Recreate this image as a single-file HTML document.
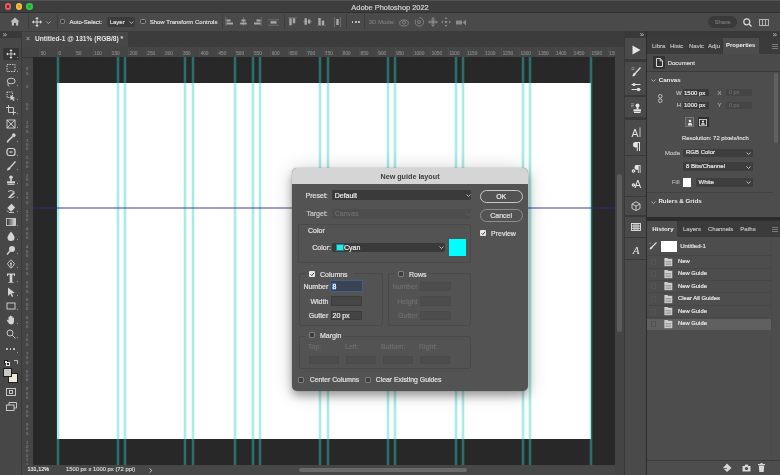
<!DOCTYPE html><html><head><meta charset="utf-8"><style>
*{margin:0;padding:0;box-sizing:border-box}
html,body{width:780px;height:475px;overflow:hidden;background:#282828;font-family:"Liberation Sans",sans-serif;color:#d8d8d8}
.a{position:absolute}
.t{position:absolute;white-space:nowrap;line-height:1;-webkit-text-stroke:0.2px currentColor}
svg{position:absolute;overflow:visible}
</style></head><body><div class="a" style="left:0;top:0;width:780px;height:475px;overflow:hidden;will-change:transform">
<div class="a" style="left:0px;top:0px;width:780px;height:12px;background:#3e3e3e;border-top:1px solid #525252"></div>
<div class="a" style="left:4.70px;top:3.2px;width:6.4px;height:6.4px;border-radius:50%;background:radial-gradient(circle,#a01818 0,#a01818 1.1px,#ea6262 1.9px)"></div>
<div class="a" style="left:15.80px;top:3.2px;width:6.4px;height:6.4px;border-radius:50%;background:radial-gradient(circle,#e0a020 0,#e0a020 1.1px,#f4c044 1.9px)"></div>
<div class="a" style="left:26.30px;top:3.2px;width:6.4px;height:6.4px;border-radius:50%;background:radial-gradient(circle,#20a830 0,#20a830 1.1px,#34c448 1.9px)"></div>
<div class="t" style="left:290px;width:200px;text-align:center;top:3.57px;font-size:7.4px;color:#d2d2d2;">Adobe Photoshop 2022</div>
<div class="a" style="left:0px;top:12px;width:780px;height:19px;background:#4a4a4a;border-top:1px solid #303030"></div>
<div class="a" style="left:0px;top:31px;width:780px;height:1px;background:#2c2c2c;"></div>
<svg style="left:10px;top:17px" width="10" height="9" viewBox="0 0 10 9"><path d="M5 0.5 L9.5 4.5 L8.2 4.5 L8.2 8.5 L6 8.5 L6 6 L4 6 L4 8.5 L1.8 8.5 L1.8 4.5 L0.5 4.5 Z" fill="#bdbdbd"/></svg>
<div class="a" style="left:28px;top:14px;width:1px;height:15px;background:#3e3e3e;"></div>
<svg style="left:32px;top:17px" width="10" height="10" viewBox="0 0 10 10"><g stroke="#d4d4d4" stroke-width="1" fill="none"><path d="M5 0.5V9.5M0.5 5H9.5"/></g><g fill="#d4d4d4"><path d="M5 0 L6.8 2 L3.2 2Z M5 10 L6.8 8 L3.2 8Z M0 5 L2 3.2 L2 6.8Z M10 5 L8 3.2 L8 6.8Z"/></g></svg>
<svg style="left:45.5px;top:20.5px" width="5" height="3" viewBox="0 0 5 3"><path d="M0.5 0.5 L2.5 2.5 L4.5 0.5" stroke="#aaa" fill="none" stroke-width="0.9"/></svg>
<div class="a" style="left:56.5px;top:14px;width:1px;height:15px;background:#3e3e3e;"></div>
<div class="a" style="left:59.5px;top:18.8px;width:5.6px;height:5.6px;background:#3c3c3c;border:0.8px solid #8a8a8a;border-radius:1.5px"></div>
<div class="t" style="left:69.5px;top:18.66px;font-size:6px;color:#dedede;">Auto-Select:</div>
<div class="a" style="left:106.7px;top:16.5px;width:28.3px;height:10.5px;background:#3b3b3b;border-radius:2px"></div>
<div class="t" style="left:109.7px;top:18.66px;font-size:6px;color:#dedede;">Layer</div>
<svg style="left:129px;top:20.5px" width="5" height="3" viewBox="0 0 5 3"><path d="M0.5 0.5 L2.5 2.5 L4.5 0.5" stroke="#bbb" fill="none" stroke-width="0.9"/></svg>
<div class="a" style="left:140px;top:18.8px;width:5.6px;height:5.6px;background:#3c3c3c;border:0.8px solid #8a8a8a;border-radius:1.5px"></div>
<div class="t" style="left:149.7px;top:18.66px;font-size:6px;color:#dedede;">Show Transform Controls</div>
<div class="a" style="left:221.5px;top:14px;width:1px;height:15px;background:#3e3e3e;"></div>
<svg style="left:224.5px;top:17px" width="9" height="9" viewBox="0 0 9 9"><rect x="0.5" y="0" width="0.7" height="9" fill="#7a7a7a"/><g fill="#a8a8a8"><rect x="1.5" y="2.5" width="4" height="2"/><rect x="1.5" y="5.5" width="6.5" height="2"/></g></svg>
<svg style="left:239px;top:17px" width="9" height="9" viewBox="0 0 9 9"><rect x="4.2" y="0" width="0.7" height="9" fill="#7a7a7a"/><g fill="#a8a8a8"><rect x="2.5" y="2.5" width="4" height="2"/><rect x="1.2" y="5.5" width="6.5" height="2"/></g></svg>
<svg style="left:252.5px;top:17px" width="9" height="9" viewBox="0 0 9 9"><rect x="7.8" y="0" width="0.7" height="9" fill="#7a7a7a"/><g fill="#a8a8a8"><rect x="3.5" y="2.5" width="4" height="2"/><rect x="1" y="5.5" width="6.5" height="2"/></g></svg>
<svg style="left:267.5px;top:18.5px" width="11" height="7" viewBox="0 0 11 7"><g fill="#7a7a7a"><rect x="0" y="0.5" width="11" height="0.7"/><rect x="0" y="5.8" width="11" height="0.7"/></g><rect x="2.5" y="2.2" width="6" height="2.4" fill="#a8a8a8"/></svg>
<div class="a" style="left:283.5px;top:14px;width:1px;height:15px;background:#3e3e3e;"></div>
<svg style="left:288px;top:17px" width="9" height="9" viewBox="0 0 9 9"><rect x="0" y="0.5" width="9" height="0.7" fill="#7a7a7a"/><g fill="#a8a8a8"><rect x="1.3" y="1.3" width="2.4" height="7"/><rect x="4.8" y="1.3" width="2.4" height="5"/></g></svg>
<svg style="left:302.5px;top:17px" width="9" height="9" viewBox="0 0 9 9"><rect x="0" y="4.2" width="9" height="0.7" fill="#7a7a7a"/><g fill="#a8a8a8"><rect x="1.5" y="1.3" width="2.4" height="6.5"/><rect x="5" y="2.6" width="2.4" height="4"/></g></svg>
<svg style="left:316.5px;top:17px" width="9" height="9" viewBox="0 0 9 9"><rect x="0" y="8" width="9" height="0.7" fill="#7a7a7a"/><g fill="#a8a8a8"><rect x="1.3" y="1" width="2.4" height="7"/><rect x="4.8" y="3.5" width="2.4" height="4.5"/></g></svg>
<svg style="left:333.5px;top:17px" width="7" height="10" viewBox="0 0 7 10"><g fill="#7a7a7a"><rect x="0.3" y="0" width="0.7" height="10"/><rect x="6" y="0" width="0.7" height="10"/></g><rect x="2.3" y="2" width="2.4" height="6" fill="#a8a8a8"/></svg>
<div class="a" style="left:345.5px;top:14px;width:1px;height:15px;background:#3e3e3e;"></div>
<div class="a" style="left:351.6px;top:20.8px;width:1.8px;height:1.8px;background:#d8d8d8;border-radius:50%"></div>
<div class="a" style="left:354.90000000000003px;top:20.8px;width:1.8px;height:1.8px;background:#d8d8d8;border-radius:50%"></div>
<div class="a" style="left:358.20000000000005px;top:20.8px;width:1.8px;height:1.8px;background:#d8d8d8;border-radius:50%"></div>
<div class="a" style="left:364px;top:14px;width:1px;height:15px;background:#3e3e3e;"></div>
<div class="t" style="left:368.7px;top:18.66px;font-size:6px;color:#777777;">3D Mode:</div>
<svg style="left:399px;top:17.5px" width="10" height="9" viewBox="0 0 10 9"><g stroke="#888888" fill="none" stroke-width="0.9"><ellipse cx="5" cy="5" rx="4.3" ry="3"/><circle cx="5" cy="4.5" r="1.6"/></g></svg>
<svg style="left:413.5px;top:17px" width="10" height="10" viewBox="0 0 10 10"><g stroke="#888888" fill="none" stroke-width="0.9"><path d="M2 2.5 A4.2 4.2 0 1 0 5 0.8"/><circle cx="5" cy="5" r="1.5"/></g></svg>
<svg style="left:428px;top:17px" width="10" height="10" viewBox="0 0 10 10"><g fill="#888888"><path d="M5 0 L7 2.5 L3 2.5Z M5 10 L7 7.5 L3 7.5Z M0 5 L2.5 3 L2.5 7Z M10 5 L7.5 3 L7.5 7Z"/><circle cx="5" cy="5" r="2"/></g></svg>
<svg style="left:441px;top:17px" width="10" height="10" viewBox="0 0 10 10"><g fill="#888888"><path d="M5 0 L6.5 2 L3.5 2Z M5 10 L6.5 8 L3.5 8Z M0 5 L2 3.5 L2 6.5Z M10 5 L8 3.5 L8 6.5Z"/><circle cx="5" cy="5" r="1.3"/></g></svg>
<svg style="left:455.5px;top:18.5px" width="11" height="7" viewBox="0 0 11 7"><g fill="#888888"><rect x="0" y="1.5" width="6" height="4"/><path d="M6.5 3.5 L10 0.5 L10 6.5Z"/></g></svg>
<div class="a" style="left:708px;top:16.3px;width:29px;height:11.6px;background:#3a3a3a;border-radius:6px"></div>
<div class="t" style="left:622.5px;width:200px;text-align:center;top:19.16px;font-size:6px;color:#747474;">Share</div>
<svg style="left:743px;top:17.5px" width="9" height="9" viewBox="0 0 9 9"><g stroke="#dcdcdc" fill="none" stroke-width="1.2"><circle cx="3.8" cy="3.8" r="3"/><path d="M6 6 L8.5 8.5"/></g></svg>
<svg style="left:758.5px;top:18.8px" width="10" height="7" viewBox="0 0 10 7"><g stroke="#bdbdbd" fill="none" stroke-width="0.9"><rect x="0.5" y="0.5" width="9" height="6"/><path d="M3.5 0.5V6.5M6.5 0.5V6.5"/></g></svg>
<div class="a" style="left:0px;top:31px;width:21px;height:444px;background:#474747;"></div>
<div class="a" style="left:0px;top:31px;width:21px;height:6.5px;background:#393939;"></div>
<svg style="left:3px;top:32.6px" width="4" height="3.6" viewBox="0 0 4 3.6"><path d="M0.4 0.3 L1.6 1.8 L0.4 3.3 M2.2 0.3 L3.4 1.8 L2.2 3.3" stroke="#d0d0d0" stroke-width="0.8" fill="none"/></svg>
<div class="a" style="left:21px;top:31px;width:1.2px;height:444px;background:#393939;"></div>
<div class="a" style="left:2.5px;top:47.5px;width:16.5px;height:12px;background:#353535;border-radius:1px"></div>
<svg style="left:5.5px;top:48.5px" width="10" height="10" viewBox="0 0 10 10"><g stroke="#d4d4d4" fill="none" stroke-width="0.9"><path d="M5 1V9M1 5H9"/></g><g fill="#d4d4d4"><path d="M5 0 L6.6 2 L3.4 2Z M5 10 L6.6 8 L3.4 8Z M0 5 L2 3.4 L2 6.6Z M10 5 L8 3.4 L8 6.6Z"/></g></svg>
<svg style="left:5.5px;top:62.5px" width="10" height="10" viewBox="0 0 10 10"><rect x="1" y="1.5" width="8" height="7" stroke="#d4d4d4" fill="none" stroke-width="0.9" stroke-dasharray="1.5 1"/></svg>
<svg style="left:5.5px;top:76.5px" width="10" height="10" viewBox="0 0 10 10"><g stroke="#d4d4d4" fill="none" stroke-width="0.9"><ellipse cx="5.2" cy="4" rx="4" ry="2.8"/><path d="M2 6 Q1.5 8.5 3 9.5"/></g></svg>
<svg style="left:5.5px;top:90.5px" width="10" height="10" viewBox="0 0 10 10"><g stroke="#d4d4d4" fill="none" stroke-width="0.9"><rect x="1" y="1" width="5.5" height="5.5" stroke-dasharray="1.3 0.8"/></g><path d="M4.5 4 L4.5 9.5 L6 8 L7.5 10 L8.5 9.5 L7.3 7.5 L9.3 7.3Z" fill="#d4d4d4"/></svg>
<svg style="left:5.5px;top:104.5px" width="10" height="10" viewBox="0 0 10 10"><g stroke="#d4d4d4" fill="none" stroke-width="0.9"><path d="M2.5 0V7.5H10M0 2.5H7.5V10"/></g></svg>
<svg style="left:5.5px;top:118.5px" width="10" height="10" viewBox="0 0 10 10"><g stroke="#d4d4d4" fill="none" stroke-width="0.9"><rect x="1" y="1" width="8" height="8"/><path d="M1 1L9 9M9 1L1 9"/></g></svg>
<svg style="left:5.5px;top:132.5px" width="10" height="10" viewBox="0 0 10 10"><g fill="#d4d4d4"><path d="M7.3 0.3 Q9.7 0.3 9.7 2.7 L8 4.4 L5.6 2Z"/></g><path d="M6.8 3.2 L2 8 L1.2 9.3" stroke="#d4d4d4" stroke-width="1.6" fill="none"/></svg>
<svg style="left:5.5px;top:146.5px" width="10" height="10" viewBox="0 0 10 10"><g stroke="#d4d4d4" fill="none" stroke-width="1.2"><rect x="1" y="1.5" width="8" height="7" rx="2.2"/></g><rect x="3.5" y="4" width="3" height="2" fill="#d4d4d4" opacity=".6"/></svg>
<svg style="left:5.5px;top:160.5px" width="10" height="10" viewBox="0 0 10 10"><path d="M9.5 0.5 L4 6.5" stroke="#d4d4d4" stroke-width="1.3"/><path d="M3.8 6 Q1 6.5 1 9.5 Q3.5 9.5 4.8 7.2Z" fill="#d4d4d4"/></svg>
<svg style="left:5.5px;top:174.5px" width="10" height="10" viewBox="0 0 10 10"><g fill="#d4d4d4"><circle cx="5" cy="2.3" r="1.8"/><rect x="4.2" y="3.5" width="1.6" height="3"/><rect x="1" y="6.3" width="8" height="2"/><rect x="1.5" y="8.8" width="7" height="1"/></g></svg>
<svg style="left:5.5px;top:188.5px" width="10" height="10" viewBox="0 0 10 10"><g stroke="#d4d4d4" fill="none" stroke-width="0.9"><path d="M2 2.5 Q5 0.5 8 2.5 L2.5 8.5 Q5.5 9.5 8.5 7.5"/></g><path d="M8.5 3.5 L4 8" stroke="#d4d4d4" stroke-width="1.2"/></svg>
<svg style="left:5.5px;top:202.5px" width="10" height="10" viewBox="0 0 10 10"><g fill="#d4d4d4"><path d="M5.5 0.8 L9.2 4.5 L5 8.7 L1.3 5Z"/></g><path d="M1 7.5 L3 9.5H8" stroke="#d4d4d4" stroke-width="0.9" fill="none"/></svg>
<svg style="left:5.5px;top:216.5px" width="10" height="10" viewBox="0 0 10 10"><defs><linearGradient id="gg"><stop offset="0" stop-color="#303030"/><stop offset="1" stop-color="#e0e0e0"/></linearGradient></defs><rect x="0.5" y="1.5" width="9" height="7" fill="url(#gg)" stroke="#d4d4d4" stroke-width="0.8"/></svg>
<svg style="left:5.5px;top:230.5px" width="10" height="10" viewBox="0 0 10 10"><path d="M5 0.5 Q8.5 5 8.5 6.5 A3.5 3.5 0 0 1 1.5 6.5 Q1.5 5 5 0.5Z" fill="#d4d4d4"/></svg>
<svg style="left:5.5px;top:244.5px" width="10" height="10" viewBox="0 0 10 10"><circle cx="6" cy="4" r="3" fill="#d4d4d4"/><path d="M4 6 L1 9.5" stroke="#d4d4d4" stroke-width="1.3"/></svg>
<svg style="left:5.5px;top:258.5px" width="10" height="10" viewBox="0 0 10 10"><g stroke="#d4d4d4" fill="none" stroke-width="0.9"><path d="M5 0.8 L8.5 4.5 Q7 8 5 9.2 Q3 8 1.5 4.5Z"/><path d="M5 4V9"/></g><circle cx="5" cy="4.5" r="0.9" fill="#d4d4d4"/></svg>
<svg style="left:5.5px;top:272.5px" width="10" height="10" viewBox="0 0 10 10"><g fill="#d4d4d4"><path d="M1 0.5H9V3H8.2Q8 1.6 6.3 1.6V9H7.5V9.8H2.5V9H3.7V1.6Q2 1.6 1.8 3H1Z"/></g></svg>
<svg style="left:5.5px;top:286.5px" width="10" height="10" viewBox="0 0 10 10"><path d="M2 0.5 L2 9 L4.3 6.8 L6 10 L7.3 9.3 L5.6 6.3 L8.8 6Z" fill="#d4d4d4"/></svg>
<svg style="left:5.5px;top:300.5px" width="10" height="10" viewBox="0 0 10 10"><rect x="1" y="2" width="8" height="6" fill="none" stroke="#d4d4d4" stroke-width="0.9"/></svg>
<svg style="left:5.5px;top:314.5px" width="10" height="10" viewBox="0 0 10 10"><path d="M2.5 4 V2 Q3.2 1 3.8 2 V4 V1 Q4.5 0 5.2 1 V4 V1.5 Q5.9 0.5 6.6 1.5 V4.5 V3 Q7.3 2 8 3 V6 Q8 9.5 5 9.5 Q3 9.5 1.5 6.5 L0.8 5 Q1.3 4.2 2.5 5.5Z" fill="#d4d4d4"/></svg>
<svg style="left:5.5px;top:328.5px" width="10" height="10" viewBox="0 0 10 10"><g stroke="#d4d4d4" fill="none" stroke-width="0.9" stroke-width="1.1"><circle cx="4" cy="4" r="3"/><path d="M6.2 6.2 L9.5 9.5"/></g></svg>
<div class="a" style="left:16.8px;top:56.7px;width:1.2px;height:1.2px;background:#9a9a9a;"></div>
<div class="a" style="left:16.8px;top:70.7px;width:1.2px;height:1.2px;background:#9a9a9a;"></div>
<div class="a" style="left:16.8px;top:84.7px;width:1.2px;height:1.2px;background:#9a9a9a;"></div>
<div class="a" style="left:16.8px;top:98.7px;width:1.2px;height:1.2px;background:#9a9a9a;"></div>
<div class="a" style="left:16.8px;top:112.7px;width:1.2px;height:1.2px;background:#9a9a9a;"></div>
<div class="a" style="left:16.8px;top:126.7px;width:1.2px;height:1.2px;background:#9a9a9a;"></div>
<div class="a" style="left:16.8px;top:140.7px;width:1.2px;height:1.2px;background:#9a9a9a;"></div>
<div class="a" style="left:16.8px;top:154.7px;width:1.2px;height:1.2px;background:#9a9a9a;"></div>
<div class="a" style="left:16.8px;top:168.7px;width:1.2px;height:1.2px;background:#9a9a9a;"></div>
<div class="a" style="left:16.8px;top:182.7px;width:1.2px;height:1.2px;background:#9a9a9a;"></div>
<div class="a" style="left:16.8px;top:196.7px;width:1.2px;height:1.2px;background:#9a9a9a;"></div>
<div class="a" style="left:16.8px;top:210.7px;width:1.2px;height:1.2px;background:#9a9a9a;"></div>
<div class="a" style="left:16.8px;top:224.7px;width:1.2px;height:1.2px;background:#9a9a9a;"></div>
<div class="a" style="left:16.8px;top:238.7px;width:1.2px;height:1.2px;background:#9a9a9a;"></div>
<div class="a" style="left:16.8px;top:252.7px;width:1.2px;height:1.2px;background:#9a9a9a;"></div>
<div class="a" style="left:16.8px;top:266.7px;width:1.2px;height:1.2px;background:#9a9a9a;"></div>
<div class="a" style="left:16.8px;top:280.7px;width:1.2px;height:1.2px;background:#9a9a9a;"></div>
<div class="a" style="left:16.8px;top:294.7px;width:1.2px;height:1.2px;background:#9a9a9a;"></div>
<div class="a" style="left:16.8px;top:308.7px;width:1.2px;height:1.2px;background:#9a9a9a;"></div>
<div class="a" style="left:16.8px;top:322.7px;width:1.2px;height:1.2px;background:#9a9a9a;"></div>
<div class="a" style="left:16.8px;top:336.7px;width:1.2px;height:1.2px;background:#9a9a9a;"></div>
<div class="a" style="left:6.1px;top:348.4px;width:1.8px;height:1.8px;background:#dcdcdc;border-radius:50%"></div>
<div class="a" style="left:9.6px;top:348.4px;width:1.8px;height:1.8px;background:#dcdcdc;border-radius:50%"></div>
<div class="a" style="left:13.1px;top:348.4px;width:1.8px;height:1.8px;background:#dcdcdc;border-radius:50%"></div>
<div class="a" style="left:16.8px;top:351.5px;width:1.2px;height:1.2px;background:#9a9a9a;"></div>
<div class="a" style="left:3.5px;top:359.5px;width:4px;height:4px;background:#e8e8e8;border:0.6px solid #222"></div>
<div class="a" style="left:5.5px;top:361.5px;width:4px;height:4px;background:#222;border:0.6px solid #e8e8e8"></div>
<svg style="left:12.5px;top:358.5px" width="6" height="6" viewBox="0 0 6 6"><path d="M1 1.5 H4.5 V5" stroke="#cfcfcf" fill="none" stroke-width="0.9"/></svg>
<div class="a" style="left:7.6px;top:372.8px;width:10.6px;height:10.6px;background:#efe9d8;border:0.8px solid #1e1e1e"></div>
<div class="a" style="left:2.5px;top:368.2px;width:9px;height:9px;background:#c9c9c5;border:0.8px solid #1e1e1e"></div>
<svg style="left:5.5px;top:388px" width="10" height="8" viewBox="0 0 10 8"><rect x="0.5" y="0.5" width="9" height="7" fill="none" stroke="#d4d4d4" stroke-width="0.9"/><rect x="3.5" y="2.5" width="3" height="3" fill="none" stroke="#d4d4d4" stroke-width="0.9"/></svg>
<svg style="left:5.5px;top:401.5px" width="11" height="9" viewBox="0 0 11 9"><g fill="none" stroke="#d4d4d4" stroke-width="0.9"><rect x="0.5" y="3" width="7.5" height="5.5"/><path d="M3 3V0.5H10.5V6H8"/></g></svg>
<div class="a" style="left:22.2px;top:31px;width:593px;height:16px;background:#3c3c3c;"></div>
<div class="a" style="left:22.2px;top:31.8px;width:106.3px;height:15.2px;background:#474747;"></div>
<div class="t" style="left:-72px;width:200px;text-align:center;top:35.37px;font-size:7px;color:#9a9a9a;">×</div>
<div class="t" style="left:35px;top:36.47px;font-size:6.6px;color:#e4e4e4;font-weight:bold;-webkit-text-stroke:0;">Untitled-1 @ 131% (RGB/8) *</div>
<div class="a" style="left:22.2px;top:47px;width:593px;height:10px;background:#454545;"></div>
<div class="a" style="left:22.2px;top:47px;width:11px;height:418px;background:#454545;"></div>
<div class="a" style="left:22.2px;top:56.5px;width:593px;height:0.6px;background:#353535;"></div>
<div class="a" style="left:32.6px;top:57px;width:0.6px;height:408px;background:#353535;"></div>
<div class="a" style="left:39.43000000000001px;top:47px;width:0.6px;height:10px;background:#4c4c4c;"></div>
<div class="t" style="left:40.730000000000004px;top:52.00px;font-size:4.7px;color:#828282;">50</div>
<div class="a" style="left:57.2px;top:47px;width:0.6px;height:10px;background:#4c4c4c;"></div>
<div class="t" style="left:58.5px;top:52.00px;font-size:4.7px;color:#828282;">0</div>
<div class="a" style="left:74.97px;top:47px;width:0.6px;height:10px;background:#4c4c4c;"></div>
<div class="t" style="left:76.27px;top:52.00px;font-size:4.7px;color:#828282;">50</div>
<div class="a" style="left:92.74px;top:47px;width:0.6px;height:10px;background:#4c4c4c;"></div>
<div class="t" style="left:94.03999999999999px;top:52.00px;font-size:4.7px;color:#828282;">100</div>
<div class="a" style="left:110.51px;top:47px;width:0.6px;height:10px;background:#4c4c4c;"></div>
<div class="t" style="left:111.81px;top:52.00px;font-size:4.7px;color:#828282;">150</div>
<div class="a" style="left:128.27999999999997px;top:47px;width:0.6px;height:10px;background:#4c4c4c;"></div>
<div class="t" style="left:129.57999999999998px;top:52.00px;font-size:4.7px;color:#828282;">200</div>
<div class="a" style="left:146.04999999999998px;top:47px;width:0.6px;height:10px;background:#4c4c4c;"></div>
<div class="t" style="left:147.35px;top:52.00px;font-size:4.7px;color:#828282;">250</div>
<div class="a" style="left:163.82px;top:47px;width:0.6px;height:10px;background:#4c4c4c;"></div>
<div class="t" style="left:165.12px;top:52.00px;font-size:4.7px;color:#828282;">300</div>
<div class="a" style="left:181.58999999999997px;top:47px;width:0.6px;height:10px;background:#4c4c4c;"></div>
<div class="t" style="left:182.89px;top:52.00px;font-size:4.7px;color:#828282;">350</div>
<div class="a" style="left:199.35999999999999px;top:47px;width:0.6px;height:10px;background:#4c4c4c;"></div>
<div class="t" style="left:200.66px;top:52.00px;font-size:4.7px;color:#828282;">400</div>
<div class="a" style="left:217.13px;top:47px;width:0.6px;height:10px;background:#4c4c4c;"></div>
<div class="t" style="left:218.43px;top:52.00px;font-size:4.7px;color:#828282;">450</div>
<div class="a" style="left:234.89999999999998px;top:47px;width:0.6px;height:10px;background:#4c4c4c;"></div>
<div class="t" style="left:236.2px;top:52.00px;font-size:4.7px;color:#828282;">500</div>
<div class="a" style="left:252.67px;top:47px;width:0.6px;height:10px;background:#4c4c4c;"></div>
<div class="t" style="left:253.97px;top:52.00px;font-size:4.7px;color:#828282;">550</div>
<div class="a" style="left:270.44px;top:47px;width:0.6px;height:10px;background:#4c4c4c;"></div>
<div class="t" style="left:271.74px;top:52.00px;font-size:4.7px;color:#828282;">600</div>
<div class="a" style="left:288.21px;top:47px;width:0.6px;height:10px;background:#4c4c4c;"></div>
<div class="t" style="left:289.51px;top:52.00px;font-size:4.7px;color:#828282;">650</div>
<div class="a" style="left:305.97999999999996px;top:47px;width:0.6px;height:10px;background:#4c4c4c;"></div>
<div class="t" style="left:307.28px;top:52.00px;font-size:4.7px;color:#828282;">700</div>
<div class="a" style="left:323.75px;top:47px;width:0.6px;height:10px;background:#4c4c4c;"></div>
<div class="t" style="left:325.05px;top:52.00px;font-size:4.7px;color:#828282;">750</div>
<div class="a" style="left:341.52px;top:47px;width:0.6px;height:10px;background:#4c4c4c;"></div>
<div class="t" style="left:342.82px;top:52.00px;font-size:4.7px;color:#828282;">800</div>
<div class="a" style="left:359.28999999999996px;top:47px;width:0.6px;height:10px;background:#4c4c4c;"></div>
<div class="t" style="left:360.59px;top:52.00px;font-size:4.7px;color:#828282;">850</div>
<div class="a" style="left:377.06px;top:47px;width:0.6px;height:10px;background:#4c4c4c;"></div>
<div class="t" style="left:378.36px;top:52.00px;font-size:4.7px;color:#828282;">900</div>
<div class="a" style="left:394.83px;top:47px;width:0.6px;height:10px;background:#4c4c4c;"></div>
<div class="t" style="left:396.13px;top:52.00px;font-size:4.7px;color:#828282;">950</div>
<div class="a" style="left:412.59999999999997px;top:47px;width:0.6px;height:10px;background:#4c4c4c;"></div>
<div class="t" style="left:413.9px;top:52.00px;font-size:4.7px;color:#828282;">1000</div>
<div class="a" style="left:430.37px;top:47px;width:0.6px;height:10px;background:#4c4c4c;"></div>
<div class="t" style="left:431.67px;top:52.00px;font-size:4.7px;color:#828282;">1050</div>
<div class="a" style="left:448.14px;top:47px;width:0.6px;height:10px;background:#4c4c4c;"></div>
<div class="t" style="left:449.44px;top:52.00px;font-size:4.7px;color:#828282;">1100</div>
<div class="a" style="left:465.90999999999997px;top:47px;width:0.6px;height:10px;background:#4c4c4c;"></div>
<div class="t" style="left:467.21px;top:52.00px;font-size:4.7px;color:#828282;">1150</div>
<div class="a" style="left:483.68px;top:47px;width:0.6px;height:10px;background:#4c4c4c;"></div>
<div class="t" style="left:484.98px;top:52.00px;font-size:4.7px;color:#828282;">1200</div>
<div class="a" style="left:501.45px;top:47px;width:0.6px;height:10px;background:#4c4c4c;"></div>
<div class="t" style="left:502.75px;top:52.00px;font-size:4.7px;color:#828282;">1250</div>
<div class="a" style="left:519.22px;top:47px;width:0.6px;height:10px;background:#4c4c4c;"></div>
<div class="t" style="left:520.52px;top:52.00px;font-size:4.7px;color:#828282;">1300</div>
<div class="a" style="left:536.99px;top:47px;width:0.6px;height:10px;background:#4c4c4c;"></div>
<div class="t" style="left:538.29px;top:52.00px;font-size:4.7px;color:#828282;">1350</div>
<div class="a" style="left:554.76px;top:47px;width:0.6px;height:10px;background:#4c4c4c;"></div>
<div class="t" style="left:556.06px;top:52.00px;font-size:4.7px;color:#828282;">1400</div>
<div class="a" style="left:572.5300000000001px;top:47px;width:0.6px;height:10px;background:#4c4c4c;"></div>
<div class="t" style="left:573.83px;top:52.00px;font-size:4.7px;color:#828282;">1450</div>
<div class="a" style="left:590.3000000000001px;top:47px;width:0.6px;height:10px;background:#4c4c4c;"></div>
<div class="t" style="left:591.6px;top:52.00px;font-size:4.7px;color:#828282;">1500</div>
<div class="a" style="left:608.07px;top:47px;width:0.6px;height:10px;background:#4c4c4c;"></div>
<div class="t" style="left:609.37px;top:52.00px;font-size:4.7px;color:#828282;">1550</div>
<div class="t" style="left:-72.8px;width:200px;text-align:center;top:67.47px;font-size:4.2px;color:#767676;">5</div>
<div class="t" style="left:-72.8px;width:200px;text-align:center;top:71.87px;font-size:4.2px;color:#767676;">0</div>
<div class="t" style="left:-72.8px;width:200px;text-align:center;top:85.24px;font-size:4.2px;color:#767676;">0</div>
<div class="t" style="left:-72.8px;width:200px;text-align:center;top:103.01px;font-size:4.2px;color:#767676;">5</div>
<div class="t" style="left:-72.8px;width:200px;text-align:center;top:107.41px;font-size:4.2px;color:#767676;">0</div>
<div class="t" style="left:-72.8px;width:200px;text-align:center;top:120.78px;font-size:4.2px;color:#767676;">1</div>
<div class="t" style="left:-72.8px;width:200px;text-align:center;top:125.18px;font-size:4.2px;color:#767676;">0</div>
<div class="t" style="left:-72.8px;width:200px;text-align:center;top:129.58px;font-size:4.2px;color:#767676;">0</div>
<div class="t" style="left:-72.8px;width:200px;text-align:center;top:138.55px;font-size:4.2px;color:#767676;">1</div>
<div class="t" style="left:-72.8px;width:200px;text-align:center;top:142.95px;font-size:4.2px;color:#767676;">5</div>
<div class="t" style="left:-72.8px;width:200px;text-align:center;top:147.35px;font-size:4.2px;color:#767676;">0</div>
<div class="t" style="left:-72.8px;width:200px;text-align:center;top:156.32px;font-size:4.2px;color:#767676;">2</div>
<div class="t" style="left:-72.8px;width:200px;text-align:center;top:160.72px;font-size:4.2px;color:#767676;">0</div>
<div class="t" style="left:-72.8px;width:200px;text-align:center;top:165.12px;font-size:4.2px;color:#767676;">0</div>
<div class="t" style="left:-72.8px;width:200px;text-align:center;top:174.09px;font-size:4.2px;color:#767676;">2</div>
<div class="t" style="left:-72.8px;width:200px;text-align:center;top:178.49px;font-size:4.2px;color:#767676;">5</div>
<div class="t" style="left:-72.8px;width:200px;text-align:center;top:182.89px;font-size:4.2px;color:#767676;">0</div>
<div class="t" style="left:-72.8px;width:200px;text-align:center;top:191.86px;font-size:4.2px;color:#767676;">3</div>
<div class="t" style="left:-72.8px;width:200px;text-align:center;top:196.26px;font-size:4.2px;color:#767676;">0</div>
<div class="t" style="left:-72.8px;width:200px;text-align:center;top:200.66px;font-size:4.2px;color:#767676;">0</div>
<div class="t" style="left:-72.8px;width:200px;text-align:center;top:209.63px;font-size:4.2px;color:#767676;">3</div>
<div class="t" style="left:-72.8px;width:200px;text-align:center;top:214.03px;font-size:4.2px;color:#767676;">5</div>
<div class="t" style="left:-72.8px;width:200px;text-align:center;top:218.43px;font-size:4.2px;color:#767676;">0</div>
<div class="t" style="left:-72.8px;width:200px;text-align:center;top:227.40px;font-size:4.2px;color:#767676;">4</div>
<div class="t" style="left:-72.8px;width:200px;text-align:center;top:231.80px;font-size:4.2px;color:#767676;">0</div>
<div class="t" style="left:-72.8px;width:200px;text-align:center;top:236.20px;font-size:4.2px;color:#767676;">0</div>
<div class="t" style="left:-72.8px;width:200px;text-align:center;top:245.17px;font-size:4.2px;color:#767676;">4</div>
<div class="t" style="left:-72.8px;width:200px;text-align:center;top:249.57px;font-size:4.2px;color:#767676;">5</div>
<div class="t" style="left:-72.8px;width:200px;text-align:center;top:253.97px;font-size:4.2px;color:#767676;">0</div>
<div class="t" style="left:-72.8px;width:200px;text-align:center;top:262.94px;font-size:4.2px;color:#767676;">5</div>
<div class="t" style="left:-72.8px;width:200px;text-align:center;top:267.34px;font-size:4.2px;color:#767676;">0</div>
<div class="t" style="left:-72.8px;width:200px;text-align:center;top:271.74px;font-size:4.2px;color:#767676;">0</div>
<div class="t" style="left:-72.8px;width:200px;text-align:center;top:280.71px;font-size:4.2px;color:#767676;">5</div>
<div class="t" style="left:-72.8px;width:200px;text-align:center;top:285.11px;font-size:4.2px;color:#767676;">5</div>
<div class="t" style="left:-72.8px;width:200px;text-align:center;top:289.51px;font-size:4.2px;color:#767676;">0</div>
<div class="t" style="left:-72.8px;width:200px;text-align:center;top:298.48px;font-size:4.2px;color:#767676;">6</div>
<div class="t" style="left:-72.8px;width:200px;text-align:center;top:302.88px;font-size:4.2px;color:#767676;">0</div>
<div class="t" style="left:-72.8px;width:200px;text-align:center;top:307.28px;font-size:4.2px;color:#767676;">0</div>
<div class="t" style="left:-72.8px;width:200px;text-align:center;top:316.25px;font-size:4.2px;color:#767676;">6</div>
<div class="t" style="left:-72.8px;width:200px;text-align:center;top:320.65px;font-size:4.2px;color:#767676;">5</div>
<div class="t" style="left:-72.8px;width:200px;text-align:center;top:325.05px;font-size:4.2px;color:#767676;">0</div>
<div class="t" style="left:-72.8px;width:200px;text-align:center;top:334.02px;font-size:4.2px;color:#767676;">7</div>
<div class="t" style="left:-72.8px;width:200px;text-align:center;top:338.42px;font-size:4.2px;color:#767676;">0</div>
<div class="t" style="left:-72.8px;width:200px;text-align:center;top:342.82px;font-size:4.2px;color:#767676;">0</div>
<div class="t" style="left:-72.8px;width:200px;text-align:center;top:351.79px;font-size:4.2px;color:#767676;">7</div>
<div class="t" style="left:-72.8px;width:200px;text-align:center;top:356.19px;font-size:4.2px;color:#767676;">5</div>
<div class="t" style="left:-72.8px;width:200px;text-align:center;top:360.59px;font-size:4.2px;color:#767676;">0</div>
<div class="t" style="left:-72.8px;width:200px;text-align:center;top:369.56px;font-size:4.2px;color:#767676;">8</div>
<div class="t" style="left:-72.8px;width:200px;text-align:center;top:373.96px;font-size:4.2px;color:#767676;">0</div>
<div class="t" style="left:-72.8px;width:200px;text-align:center;top:378.36px;font-size:4.2px;color:#767676;">0</div>
<div class="t" style="left:-72.8px;width:200px;text-align:center;top:387.33px;font-size:4.2px;color:#767676;">8</div>
<div class="t" style="left:-72.8px;width:200px;text-align:center;top:391.73px;font-size:4.2px;color:#767676;">5</div>
<div class="t" style="left:-72.8px;width:200px;text-align:center;top:396.13px;font-size:4.2px;color:#767676;">0</div>
<div class="t" style="left:-72.8px;width:200px;text-align:center;top:405.10px;font-size:4.2px;color:#767676;">9</div>
<div class="t" style="left:-72.8px;width:200px;text-align:center;top:409.50px;font-size:4.2px;color:#767676;">0</div>
<div class="t" style="left:-72.8px;width:200px;text-align:center;top:413.90px;font-size:4.2px;color:#767676;">0</div>
<div class="t" style="left:-72.8px;width:200px;text-align:center;top:422.87px;font-size:4.2px;color:#767676;">9</div>
<div class="t" style="left:-72.8px;width:200px;text-align:center;top:427.27px;font-size:4.2px;color:#767676;">5</div>
<div class="t" style="left:-72.8px;width:200px;text-align:center;top:431.67px;font-size:4.2px;color:#767676;">0</div>
<div class="t" style="left:-72.8px;width:200px;text-align:center;top:440.64px;font-size:4.2px;color:#767676;">1</div>
<div class="t" style="left:-72.8px;width:200px;text-align:center;top:445.04px;font-size:4.2px;color:#767676;">0</div>
<div class="t" style="left:-72.8px;width:200px;text-align:center;top:449.44px;font-size:4.2px;color:#767676;">0</div>
<div class="t" style="left:-72.8px;width:200px;text-align:center;top:453.84px;font-size:4.2px;color:#767676;">0</div>
<div class="t" style="left:-72.8px;width:200px;text-align:center;top:458.41px;font-size:4.2px;color:#767676;">1</div>
<div class="t" style="left:-72.8px;width:200px;text-align:center;top:462.81px;font-size:4.2px;color:#767676;">0</div>
<div class="t" style="left:-72.8px;width:200px;text-align:center;top:467.21px;font-size:4.2px;color:#767676;">5</div>
<div class="t" style="left:-72.8px;width:200px;text-align:center;top:471.61px;font-size:4.2px;color:#767676;">0</div>
<div class="a" style="left:33.2px;top:57px;width:581.8px;height:408px;background:#282828;"></div>
<div class="a" style="left:57.2px;top:83.3px;width:533.6px;height:355.4px;background:#ffffff;"></div>
<div class="a" style="left:56px;top:57px;width:1px;height:408px;background:rgba(0,220,220,.12)"></div>
<div class="a" style="left:57px;top:57px;width:2px;height:408px;background:rgba(60,205,195,.42)"></div>
<div class="a" style="left:59px;top:57px;width:1px;height:408px;background:rgba(0,220,220,.12)"></div>
<div class="a" style="left:116px;top:57px;width:1px;height:408px;background:rgba(0,220,220,.12)"></div>
<div class="a" style="left:117px;top:57px;width:2px;height:408px;background:rgba(60,205,195,.42)"></div>
<div class="a" style="left:119px;top:57px;width:1px;height:408px;background:rgba(0,220,220,.12)"></div>
<div class="a" style="left:123px;top:57px;width:1px;height:408px;background:rgba(0,220,220,.12)"></div>
<div class="a" style="left:124px;top:57px;width:2px;height:408px;background:rgba(60,205,195,.42)"></div>
<div class="a" style="left:126px;top:57px;width:1px;height:408px;background:rgba(0,220,220,.12)"></div>
<div class="a" style="left:183px;top:57px;width:1px;height:408px;background:rgba(0,220,220,.12)"></div>
<div class="a" style="left:184px;top:57px;width:2px;height:408px;background:rgba(60,205,195,.42)"></div>
<div class="a" style="left:186px;top:57px;width:1px;height:408px;background:rgba(0,220,220,.12)"></div>
<div class="a" style="left:191px;top:57px;width:1px;height:408px;background:rgba(0,220,220,.12)"></div>
<div class="a" style="left:192px;top:57px;width:2px;height:408px;background:rgba(60,205,195,.42)"></div>
<div class="a" style="left:194px;top:57px;width:1px;height:408px;background:rgba(0,220,220,.12)"></div>
<div class="a" style="left:233px;top:57px;width:1px;height:408px;background:rgba(0,220,220,.12)"></div>
<div class="a" style="left:234px;top:57px;width:2px;height:408px;background:rgba(60,205,195,.42)"></div>
<div class="a" style="left:236px;top:57px;width:1px;height:408px;background:rgba(0,220,220,.12)"></div>
<div class="a" style="left:251px;top:57px;width:1px;height:408px;background:rgba(0,220,220,.12)"></div>
<div class="a" style="left:252px;top:57px;width:2px;height:408px;background:rgba(60,205,195,.42)"></div>
<div class="a" style="left:254px;top:57px;width:1px;height:408px;background:rgba(0,220,220,.12)"></div>
<div class="a" style="left:258px;top:57px;width:1px;height:408px;background:rgba(0,220,220,.12)"></div>
<div class="a" style="left:259px;top:57px;width:2px;height:408px;background:rgba(60,205,195,.42)"></div>
<div class="a" style="left:261px;top:57px;width:1px;height:408px;background:rgba(0,220,220,.12)"></div>
<div class="a" style="left:318px;top:57px;width:1px;height:408px;background:rgba(0,220,220,.12)"></div>
<div class="a" style="left:319px;top:57px;width:2px;height:408px;background:rgba(60,205,195,.42)"></div>
<div class="a" style="left:321px;top:57px;width:1px;height:408px;background:rgba(0,220,220,.12)"></div>
<div class="a" style="left:326px;top:57px;width:1px;height:408px;background:rgba(0,220,220,.12)"></div>
<div class="a" style="left:327px;top:57px;width:2px;height:408px;background:rgba(60,205,195,.42)"></div>
<div class="a" style="left:329px;top:57px;width:1px;height:408px;background:rgba(0,220,220,.12)"></div>
<div class="a" style="left:386px;top:57px;width:1px;height:408px;background:rgba(0,220,220,.12)"></div>
<div class="a" style="left:387px;top:57px;width:2px;height:408px;background:rgba(60,205,195,.42)"></div>
<div class="a" style="left:389px;top:57px;width:1px;height:408px;background:rgba(0,220,220,.12)"></div>
<div class="a" style="left:393px;top:57px;width:1px;height:408px;background:rgba(0,220,220,.12)"></div>
<div class="a" style="left:394px;top:57px;width:2px;height:408px;background:rgba(60,205,195,.42)"></div>
<div class="a" style="left:396px;top:57px;width:1px;height:408px;background:rgba(0,220,220,.12)"></div>
<div class="a" style="left:454px;top:57px;width:1px;height:408px;background:rgba(0,220,220,.12)"></div>
<div class="a" style="left:455px;top:57px;width:2px;height:408px;background:rgba(60,205,195,.42)"></div>
<div class="a" style="left:457px;top:57px;width:1px;height:408px;background:rgba(0,220,220,.12)"></div>
<div class="a" style="left:461px;top:57px;width:1px;height:408px;background:rgba(0,220,220,.12)"></div>
<div class="a" style="left:462px;top:57px;width:2px;height:408px;background:rgba(60,205,195,.42)"></div>
<div class="a" style="left:464px;top:57px;width:1px;height:408px;background:rgba(0,220,220,.12)"></div>
<div class="a" style="left:521px;top:57px;width:1px;height:408px;background:rgba(0,220,220,.12)"></div>
<div class="a" style="left:522px;top:57px;width:2px;height:408px;background:rgba(60,205,195,.42)"></div>
<div class="a" style="left:524px;top:57px;width:1px;height:408px;background:rgba(0,220,220,.12)"></div>
<div class="a" style="left:528px;top:57px;width:1px;height:408px;background:rgba(0,220,220,.12)"></div>
<div class="a" style="left:529px;top:57px;width:2px;height:408px;background:rgba(60,205,195,.42)"></div>
<div class="a" style="left:531px;top:57px;width:1px;height:408px;background:rgba(0,220,220,.12)"></div>
<div class="a" style="left:589px;top:57px;width:1px;height:408px;background:rgba(0,220,220,.12)"></div>
<div class="a" style="left:590px;top:57px;width:2px;height:408px;background:rgba(60,205,195,.42)"></div>
<div class="a" style="left:592px;top:57px;width:1px;height:408px;background:rgba(0,220,220,.12)"></div>
<div class="a" style="left:33.2px;top:207.3px;width:581.8px;height:1.4px;background:rgba(45,45,130,.45);"></div>
<div class="a" style="left:22.2px;top:465px;width:603px;height:10px;background:#474747;"></div>
<div class="t" style="left:27.5px;top:467.31px;font-size:5.5px;color:#e2e2e2;">131,12%</div>
<div class="t" style="left:66px;top:467.13px;font-size:5.85px;color:#d4d4d4;">1500 px x 1000 px (72 ppi)</div>
<svg style="left:148.5px;top:467.5px" width="4" height="5" viewBox="0 0 4 5"><path d="M0.5 0.5 L3 2.5 L0.5 4.5" stroke="#cfcfcf" fill="none" stroke-width="0.8"/></svg>
<div class="a" style="left:298.5px;top:467.7px;width:168.3px;height:4.5px;background:#6a6a6a;border-radius:2px"></div>
<div class="a" style="left:615px;top:47px;width:8.5px;height:428px;background:#444444;"></div>
<div class="a" style="left:616.8px;top:173.5px;width:5.2px;height:158px;background:#5c5c5c;border-radius:2.5px"></div>
<div class="a" style="left:615px;top:31px;width:8.5px;height:16px;background:#3c3c3c;"></div>
<div class="a" style="left:623.5px;top:31px;width:1.5px;height:444px;background:#393939;"></div>
<div class="a" style="left:625px;top:31px;width:21.3px;height:444px;background:#4a4a4a;"></div>
<div class="a" style="left:625px;top:31px;width:21.3px;height:6.6px;background:#393939;"></div>
<svg style="left:639.8px;top:32.6px" width="4" height="3.6" viewBox="0 0 4 3.6"><path d="M0.4 0.3 L1.6 1.8 L0.4 3.3 M2.2 0.3 L3.4 1.8 L2.2 3.3" stroke="#d0d0d0" stroke-width="0.8" fill="none"/></svg>
<div class="a" style="left:646.3px;top:31px;width:0.8px;height:444px;background:#2c2c2c;"></div>
<div class="a" style="left:625px;top:36.4px;width:21.3px;height:1.2px;background:#393939;"></div>
<div class="a" style="left:625px;top:60.4px;width:21.3px;height:1.2px;background:#393939;"></div>
<div class="a" style="left:625px;top:95.8px;width:21.3px;height:1.2px;background:#393939;"></div>
<div class="a" style="left:625px;top:118.39999999999999px;width:21.3px;height:1.2px;background:#393939;"></div>
<div class="a" style="left:625px;top:155.20000000000002px;width:21.3px;height:1.2px;background:#393939;"></div>
<div class="a" style="left:625px;top:195.5px;width:21.3px;height:1.2px;background:#393939;"></div>
<div class="a" style="left:625px;top:215.8px;width:21.3px;height:1.2px;background:#393939;"></div>
<div class="a" style="left:625px;top:237.20000000000002px;width:21.3px;height:1.2px;background:#393939;"></div>
<div class="a" style="left:625px;top:59.3px;width:21.3px;height:1.2px;background:#393939;"></div>
<div class="a" style="left:625px;top:94.5px;width:21.3px;height:1.2px;background:#393939;"></div>
<div class="a" style="left:625px;top:117.2px;width:21.3px;height:1.2px;background:#393939;"></div>
<div class="a" style="left:625px;top:155.2px;width:21.3px;height:1.2px;background:#393939;"></div>
<div class="a" style="left:625px;top:195.6px;width:21.3px;height:1.2px;background:#393939;"></div>
<div class="a" style="left:625px;top:214.6px;width:21.3px;height:1.2px;background:#393939;"></div>
<div class="a" style="left:625px;top:237.2px;width:21.3px;height:1.2px;background:#393939;"></div>
<div class="a" style="left:625px;top:258.6px;width:21.3px;height:1.2px;background:#393939;"></div>
<svg style="left:630.6px;top:45.2px" width="10" height="10" viewBox="0 0 10 10"><path d="M1.5 0.5 L9.5 5 L1.5 9.5Z" fill="#e6e6e6"/></svg>
<svg style="left:630.6px;top:66.7px" width="10" height="10" viewBox="0 0 10 10"><path d="M9.5 0.5 L4.5 6" stroke="#e0e0e0" stroke-width="1.3"/><path d="M4.3 5.5 Q1.5 6 1.5 9.5 Q4 9.5 5.2 6.8Z" fill="#e0e0e0"/><g fill="#aaa"><rect x="0.5" y="0.5" width="3" height="0.7"/><rect x="0.5" y="2" width="3" height="0.7"/></g></svg>
<svg style="left:630.6px;top:81.8px" width="10" height="10" viewBox="0 0 10 10"><g stroke="#e0e0e0" stroke-width="1"><path d="M0.5 2.5H9.5M0.5 7.5H9.5"/></g><g fill="#e0e0e0"><circle cx="3" cy="2.5" r="1.6"/><circle cx="7.5" cy="7.5" r="1.8"/></g></svg>
<svg style="left:630.6px;top:103.0px" width="10" height="10" viewBox="0 0 10 10"><g fill="#e6e6e6"><circle cx="6.5" cy="2.6" r="2"/><rect x="5.6" y="4" width="1.8" height="2.5"/><rect x="2.5" y="6.3" width="7.5" height="2.2"/><rect x="3" y="9" width="6.5" height="1"/></g><g fill="#aaa"><rect x="0" y="0.5" width="3" height="0.7"/><rect x="0" y="2" width="3" height="0.7"/><rect x="0" y="3.5" width="2" height="0.7"/></g></svg>
<svg style="left:630.6px;top:127.30000000000001px" width="10" height="10" viewBox="0 0 10 10"><text x="0.5" y="9.5" font-size="10.5" font-family="Liberation Sans" fill="#e6e6e6">A</text><rect x="8.6" y="0.5" width="0.8" height="9.5" fill="#e6e6e6"/></svg>
<svg style="left:630.6px;top:140.5px" width="10" height="10" viewBox="0 0 10 10"><path d="M4.5 1H9V10H8V2H6.8V10H5.8V6.5H4.5Q2 6.5 2 3.8Q2 1 4.5 1Z" fill="#e6e6e6"/></svg>
<svg style="left:630.6px;top:164.0px" width="10" height="10" viewBox="0 0 10 10"><path d="M5.5 1H9.5V9H8.7V1.8H7.7V9H6.9V5.8H5.5Q3.5 5.8 3.5 3.4Q3.5 1 5.5 1Z" fill="#e6e6e6"/><circle cx="2.5" cy="7" r="1.8" fill="#e6e6e6"/><circle cx="2.5" cy="7" r="0.6" fill="#474747"/></svg>
<svg style="left:630.6px;top:177.8px" width="10" height="10" viewBox="0 0 10 10"><text x="3.5" y="9.5" font-size="10" font-family="Liberation Sans" fill="#e6e6e6">A</text><circle cx="2.5" cy="7" r="1.8" fill="#e6e6e6"/><circle cx="2.5" cy="7" r="0.6" fill="#474747"/></svg>
<svg style="left:630.6px;top:200.5px" width="10" height="10" viewBox="0 0 10 10"><g stroke="#d6d6d6" stroke-width="0.9" fill="none"><path d="M5 0.8 L9 3 V7.5 L5 9.5 L1 7.5 V3Z M1 3 L5 5 L9 3 M5 5V9.5"/></g></svg>
<svg style="left:630.6px;top:222.0px" width="10" height="10" viewBox="0 0 10 10"><g fill="none" stroke="#e6e6e6" stroke-width="0.9"><rect x="0.5" y="1.5" width="9" height="7"/><path d="M0.5 4H9.5M0.5 6.3H9.5M3 1.5V8.5M5 1.5V8.5M7 1.5V8.5"/></g></svg>
<svg style="left:630.6px;top:243.5px" width="10" height="10" viewBox="0 0 10 10"><text x="5" y="9.5" font-size="11" text-anchor="middle" font-family="Liberation Serif" font-style="italic" fill="#e6e6e6">A</text></svg>
<div class="a" style="left:647.1px;top:31px;width:132.9px;height:7px;background:#393939;"></div>
<svg style="left:772.6px;top:32.6px" width="4" height="3.6" viewBox="0 0 4 3.6"><path d="M0.4 0.3 L1.6 1.8 L0.4 3.3 M2.2 0.3 L3.4 1.8 L2.2 3.3" stroke="#d0d0d0" stroke-width="0.8" fill="none"/></svg>
<div class="a" style="left:647.1px;top:38px;width:132.9px;height:16.2px;background:#3b3b3b;"></div>
<div class="a" style="left:722.8px;top:38px;width:36px;height:16.2px;background:#4d4d4d;"></div>
<div class="t" style="left:652px;top:42.76px;font-size:6px;color:#bdbdbd;">Libra</div>
<div class="t" style="left:670px;top:42.76px;font-size:6px;color:#bdbdbd;">Histc</div>
<div class="t" style="left:689px;top:42.76px;font-size:6px;color:#bdbdbd;">Navic</div>
<div class="t" style="left:708px;top:42.76px;font-size:6px;color:#bdbdbd;">Adju</div>
<div class="a" style="left:668.5px;top:41px;width:0.6px;height:10px;background:#353535;"></div>
<div class="a" style="left:687.5px;top:41px;width:0.6px;height:10px;background:#353535;"></div>
<div class="a" style="left:706.5px;top:41px;width:0.6px;height:10px;background:#353535;"></div>
<div class="a" style="left:721.5px;top:41px;width:0.6px;height:10px;background:#353535;"></div>
<div class="t" style="left:726px;top:42.88px;font-size:5.95px;color:#f0f0f0;font-weight:bold;-webkit-text-stroke:0;">Properties</div>
<svg style="left:771.5px;top:43.5px" width="6" height="5" viewBox="0 0 6 5"><g fill="#8a8a8a"><rect x="0" y="0" width="6" height="0.8"/><rect x="0" y="2" width="6" height="0.8"/><rect x="0" y="4" width="6" height="0.8"/></g></svg>
<div class="a" style="left:647.1px;top:54.2px;width:132.9px;height:162.8px;background:#4d4d4d;"></div>
<div class="a" style="left:647.1px;top:54.2px;width:132.9px;height:17px;background:#4a4a4a;"></div>
<div class="a" style="left:647.1px;top:71px;width:132.9px;height:0.8px;background:#3a3a3a;"></div>
<div class="a" style="left:653.4px;top:56.3px;width:11.6px;height:12.7px;background:#333333;border-radius:1px"></div>
<svg style="left:655.7px;top:58.2px" width="7" height="9" viewBox="0 0 7 9"><path d="M0.5 0.5 H4.2 L6.5 2.8 V8.5 H0.5Z M4.2 0.5 V2.8 H6.5" stroke="#e6e6e6" stroke-width="0.9" fill="none"/></svg>
<div class="t" style="left:667.7px;top:59.86px;font-size:6px;color:#dcdcdc;">Document</div>
<svg style="left:650.5px;top:78.5px" width="5" height="3" viewBox="0 0 5 3"><path d="M0.5 0.5 L2.5 2.5 L4.5 0.5" stroke="#bbb" fill="none" stroke-width="0.9"/></svg>
<div class="t" style="left:658.7px;top:77.16px;font-size:6.2px;color:#ececec;font-weight:bold;-webkit-text-stroke:0;">Canvas</div>
<div class="a" style="left:773.8px;top:73px;width:4px;height:70px;background:#606060;border-radius:2px"></div>
<div class="t" style="left:578.8px;width:200px;text-align:center;top:89.76px;font-size:6px;color:#bdbdbd;">W</div>
<div class="a" style="left:682.5px;top:89.4px;width:26.5px;height:6.8px;background:#3a3a3a;"></div>
<div class="t" style="left:684px;top:89.86px;font-size:6px;color:#e8e8e8;">1500 px</div>
<div class="t" style="left:619.5px;width:200px;text-align:center;top:89.76px;font-size:6px;color:#a0a0a0;">X</div>
<div class="a" style="left:726px;top:89.4px;width:26.4px;height:6.8px;background:#454545;"></div>
<div class="t" style="left:729px;top:90.11px;font-size:5.5px;color:#6a6a6a;">0 px</div>
<div class="t" style="left:578.8px;width:200px;text-align:center;top:102.36px;font-size:6px;color:#bdbdbd;">H</div>
<div class="a" style="left:682.5px;top:102px;width:26.5px;height:6.8px;background:#3a3a3a;"></div>
<div class="t" style="left:684px;top:102.46px;font-size:6px;color:#e8e8e8;">1000 px</div>
<div class="t" style="left:619.5px;width:200px;text-align:center;top:102.36px;font-size:6px;color:#a0a0a0;">Y</div>
<div class="a" style="left:726px;top:102px;width:26.4px;height:6.8px;background:#454545;"></div>
<div class="t" style="left:729px;top:102.71px;font-size:5.5px;color:#6a6a6a;">0 px</div>
<svg style="left:657.6px;top:94px" width="4.5" height="9" viewBox="0 0 4.5 9"><g fill="none" stroke="#cfcfcf" stroke-width="0.9"><rect x="0.5" y="0.5" width="3.5" height="3.6" rx="1.7"/><rect x="0.5" y="4.9" width="3.5" height="3.6" rx="1.7"/></g></svg>
<div class="a" style="left:685px;top:117.4px;width:9px;height:9.6px;background:#555;border:0.6px solid #777"></div>
<svg style="left:686.5px;top:118.5px" width="6" height="7.5" viewBox="0 0 6 7.5"><g fill="#e6e6e6"><circle cx="3" cy="2" r="1.3"/><path d="M0.8 6.5 Q0.8 3.8 3 3.8 Q5.2 3.8 5.2 6.5Z"/></g></svg>
<div class="a" style="left:697.6px;top:117.4px;width:11.4px;height:9.6px;background:#2f2f2f;"></div>
<svg style="left:699.3px;top:118.6px" width="8" height="7.2" viewBox="0 0 8 7.2"><rect x="0.4" y="0.4" width="7.2" height="6.4" fill="none" stroke="#e6e6e6" stroke-width="0.8"/><g fill="#e6e6e6"><circle cx="4" cy="2.6" r="1.1"/><path d="M2 5.8 Q2 4 4 4 Q6 4 6 5.8Z"/></g></svg>
<div class="t" style="left:682px;top:136.11px;font-size:5.9px;color:#dcdcdc;">Resolution: 72 pixels/inch</div>
<div class="t" style="left:480px;width:200px;text-align:right;top:149.66px;font-size:6px;color:#bdbdbd;">Mode</div>
<div class="a" style="left:683px;top:148.6px;width:69.7px;height:8.2px;background:#3e3e3e;border-radius:1px"></div>
<div class="t" style="left:686px;top:149.46px;font-size:6px;color:#e6e6e6;">RGB Color</div>
<div class="a" style="left:683px;top:162.4px;width:69.7px;height:8.2px;background:#3e3e3e;border-radius:1px"></div>
<div class="t" style="left:686px;top:163.16px;font-size:6px;color:#e6e6e6;">8 Bits/Channel</div>
<div class="t" style="left:479.5px;width:200px;text-align:right;top:179.36px;font-size:6px;color:#a8a8a8;">Fill</div>
<div class="a" style="left:682.7px;top:178px;width:8.6px;height:8.7px;background:#ffffff;"></div>
<div class="a" style="left:695.5px;top:178px;width:57.2px;height:8.6px;background:#3e3e3e;border-radius:1px"></div>
<div class="t" style="left:698.5px;top:179.36px;font-size:6px;color:#e6e6e6;">White</div>
<svg style="left:746px;top:151.8px" width="5" height="3" viewBox="0 0 5 3"><path d="M0.5 0.5 L2.5 2.5 L4.5 0.5" stroke="#ccc" fill="none" stroke-width="0.9"/></svg>
<svg style="left:746px;top:165.6px" width="5" height="3" viewBox="0 0 5 3"><path d="M0.5 0.5 L2.5 2.5 L4.5 0.5" stroke="#ccc" fill="none" stroke-width="0.9"/></svg>
<svg style="left:746px;top:181.3px" width="5" height="3" viewBox="0 0 5 3"><path d="M0.5 0.5 L2.5 2.5 L4.5 0.5" stroke="#ccc" fill="none" stroke-width="0.9"/></svg>
<div class="a" style="left:647.1px;top:192.2px;width:126px;height:0.8px;background:#424242;"></div>
<svg style="left:650.5px;top:200.5px" width="5" height="3" viewBox="0 0 5 3"><path d="M0.5 0.5 L2.5 2.5 L4.5 0.5" stroke="#bbb" fill="none" stroke-width="0.9"/></svg>
<div class="t" style="left:658.4px;top:198.06px;font-size:6.2px;color:#ececec;font-weight:bold;-webkit-text-stroke:0;">Rulers &amp; Grids</div>
<div class="a" style="left:647.1px;top:217px;width:132.9px;height:4px;background:#2c2c2c;"></div>
<div class="a" style="left:647.1px;top:221px;width:132.9px;height:15.8px;background:#3b3b3b;"></div>
<div class="a" style="left:647.1px;top:221px;width:30.3px;height:15.8px;background:#4d4d4d;"></div>
<div class="t" style="left:652.3px;top:226.16px;font-size:6.2px;color:#f0f0f0;font-weight:bold;-webkit-text-stroke:0;">History</div>
<div class="t" style="left:683px;top:226.26px;font-size:6px;color:#bdbdbd;">Layers</div>
<div class="t" style="left:708px;top:226.26px;font-size:6px;color:#bdbdbd;">Channels</div>
<div class="t" style="left:740.3px;top:226.26px;font-size:6px;color:#bdbdbd;">Paths</div>
<svg style="left:771.5px;top:226.5px" width="6" height="5" viewBox="0 0 6 5"><g fill="#8a8a8a"><rect x="0" y="0" width="6" height="0.8"/><rect x="0" y="2" width="6" height="0.8"/><rect x="0" y="4" width="6" height="0.8"/></g></svg>
<div class="a" style="left:647.1px;top:236.8px;width:132.9px;height:238.2px;background:#4d4d4d;"></div>
<div class="a" style="left:771px;top:237px;width:0.6px;height:222px;background:#494949;"></div>
<svg style="left:649px;top:242px" width="8" height="8" viewBox="0 0 8 8"><path d="M7.5 0.5 L3 5" stroke="#e0e0e0" stroke-width="1.1"/><path d="M2.8 4.6 Q0.5 5 0.5 7.5 Q2.8 7.5 3.8 5.6Z" fill="#e0e0e0"/><path d="M0.5 2 L2 0.5" stroke="#aaa" stroke-width="0.8"/></svg>
<div class="a" style="left:661px;top:241px;width:16.4px;height:10.8px;background:#ffffff;"></div>
<div class="t" style="left:680.2px;top:243.36px;font-size:6px;color:#e0e0e0;">Untitled-1</div>
<div class="a" style="left:647.1px;top:254.5px;width:123.5px;height:0.6px;background:#474747;"></div>
<div class="a" style="left:650.5px;top:258.8px;width:5.5px;height:6px;background:transparent;border:0.6px solid #535353"></div>
<svg style="left:663.8px;top:257.5px" width="8.7" height="8.6" viewBox="0 0 8.7 8.6"><rect x="0.4" y="0.8" width="7.9" height="7.4" fill="#cfcfcf"/><rect x="0.4" y="0" width="3.5" height="1.2" fill="#cfcfcf"/><g fill="#8a8a8a"><rect x="1.5" y="3" width="5.7" height="0.7"/><rect x="1.5" y="4.7" width="5.7" height="0.7"/><rect x="1.5" y="6.4" width="5.7" height="0.7"/></g></svg>
<div class="t" style="left:678px;top:258.93px;font-size:5.85px;color:#e6e6e6;">New</div>
<div class="a" style="left:647.1px;top:267.6px;width:123.5px;height:0.6px;background:#474747;"></div>
<div class="a" style="left:650.5px;top:271.1px;width:5.5px;height:6px;background:transparent;border:0.6px solid #535353"></div>
<svg style="left:663.8px;top:269.8px" width="8.7" height="8.6" viewBox="0 0 8.7 8.6"><rect x="0.4" y="0.8" width="7.9" height="7.4" fill="#cfcfcf"/><rect x="0.4" y="0" width="3.5" height="1.2" fill="#cfcfcf"/><g fill="#8a8a8a"><rect x="1.5" y="3" width="5.7" height="0.7"/><rect x="1.5" y="4.7" width="5.7" height="0.7"/><rect x="1.5" y="6.4" width="5.7" height="0.7"/></g></svg>
<div class="t" style="left:678px;top:271.23px;font-size:5.85px;color:#e6e6e6;">New Guide</div>
<div class="a" style="left:647.1px;top:279.90000000000003px;width:123.5px;height:0.6px;background:#474747;"></div>
<div class="a" style="left:650.5px;top:283.4px;width:5.5px;height:6px;background:transparent;border:0.6px solid #535353"></div>
<svg style="left:663.8px;top:282.09999999999997px" width="8.7" height="8.6" viewBox="0 0 8.7 8.6"><rect x="0.4" y="0.8" width="7.9" height="7.4" fill="#cfcfcf"/><rect x="0.4" y="0" width="3.5" height="1.2" fill="#cfcfcf"/><g fill="#8a8a8a"><rect x="1.5" y="3" width="5.7" height="0.7"/><rect x="1.5" y="4.7" width="5.7" height="0.7"/><rect x="1.5" y="6.4" width="5.7" height="0.7"/></g></svg>
<div class="t" style="left:678px;top:283.53px;font-size:5.85px;color:#e6e6e6;">New Guide</div>
<div class="a" style="left:647.1px;top:292.2px;width:123.5px;height:0.6px;background:#474747;"></div>
<div class="a" style="left:650.5px;top:296.1px;width:5.5px;height:6px;background:transparent;border:0.6px solid #535353"></div>
<svg style="left:663.8px;top:294.8px" width="8.7" height="8.6" viewBox="0 0 8.7 8.6"><rect x="0.4" y="0.8" width="7.9" height="7.4" fill="#cfcfcf"/><rect x="0.4" y="0" width="3.5" height="1.2" fill="#cfcfcf"/><g fill="#8a8a8a"><rect x="1.5" y="3" width="5.7" height="0.7"/><rect x="1.5" y="4.7" width="5.7" height="0.7"/><rect x="1.5" y="6.4" width="5.7" height="0.7"/></g></svg>
<div class="t" style="left:678px;top:296.23px;font-size:5.85px;color:#e6e6e6;">Clear All Guides</div>
<div class="a" style="left:647.1px;top:304.90000000000003px;width:123.5px;height:0.6px;background:#474747;"></div>
<div class="a" style="left:650.5px;top:308.5px;width:5.5px;height:6px;background:transparent;border:0.6px solid #535353"></div>
<svg style="left:663.8px;top:307.2px" width="8.7" height="8.6" viewBox="0 0 8.7 8.6"><rect x="0.4" y="0.8" width="7.9" height="7.4" fill="#cfcfcf"/><rect x="0.4" y="0" width="3.5" height="1.2" fill="#cfcfcf"/><g fill="#8a8a8a"><rect x="1.5" y="3" width="5.7" height="0.7"/><rect x="1.5" y="4.7" width="5.7" height="0.7"/><rect x="1.5" y="6.4" width="5.7" height="0.7"/></g></svg>
<div class="t" style="left:678px;top:308.63px;font-size:5.85px;color:#e6e6e6;">New Guide</div>
<div class="a" style="left:647.1px;top:317.3px;width:123.5px;height:0.6px;background:#474747;"></div>
<div class="a" style="left:647.4px;top:318.6px;width:123.6px;height:11px;background:#606060;"></div>
<div class="a" style="left:650.5px;top:320.8px;width:5.5px;height:6px;background:transparent;border:0.6px solid #535353"></div>
<svg style="left:663.8px;top:319.5px" width="8.7" height="8.6" viewBox="0 0 8.7 8.6"><rect x="0.4" y="0.8" width="7.9" height="7.4" fill="#cfcfcf"/><rect x="0.4" y="0" width="3.5" height="1.2" fill="#cfcfcf"/><g fill="#8a8a8a"><rect x="1.5" y="3" width="5.7" height="0.7"/><rect x="1.5" y="4.7" width="5.7" height="0.7"/><rect x="1.5" y="6.4" width="5.7" height="0.7"/></g></svg>
<div class="t" style="left:678px;top:320.93px;font-size:5.85px;color:#e6e6e6;">New Guide</div>
<div class="a" style="left:647.1px;top:459.5px;width:132.9px;height:0.8px;background:#3a3a3a;"></div>
<svg style="left:722.5px;top:463px" width="9" height="9" viewBox="0 0 9 9"><g fill="#d8d8d8"><path d="M4 0.5 L8.5 5 L4 9 L0 5Z"/></g><path d="M0.5 5.5 H4" stroke="#474747" stroke-width="0.8"/></svg>
<svg style="left:741.5px;top:463.5px" width="9" height="8" viewBox="0 0 9 8"><path d="M0.5 2 H2.5 L3.5 0.5 H5.5 L6.5 2 H8.5 V7.5 H0.5Z" fill="#d8d8d8"/><circle cx="4.5" cy="4.5" r="1.6" fill="#4a4a4a"/></svg>
<svg style="left:758px;top:462.5px" width="7" height="9" viewBox="0 0 7 9"><g fill="#d8d8d8"><rect x="0" y="1" width="7" height="1"/><rect x="2.5" y="0" width="2" height="1"/><path d="M0.8 2.5 H6.2 L5.7 9 H1.3Z"/></g></svg>
<div class="a" style="left:292.3px;top:168.3px;width:235.7px;height:222.4px;border-radius:5px;background:#535353;overflow:hidden;box-shadow:0 5px 9px rgba(0,0,0,.3),0 2px 20px rgba(0,0,0,.2),0 0 2px rgba(0,0,0,.2)"></div>
<div class="a" style="left:292.3px;top:168.3px;width:235.7px;height:15.5px;background:#d5d5d5;border-radius:5px 5px 0 0"></div>
<div class="t" style="left:310px;width:200px;text-align:center;top:172.77px;font-size:7.2px;color:#3c3c3c;font-weight:bold;-webkit-text-stroke:0;">New guide layout</div>
<div class="t" style="left:127.80000000000001px;width:200px;text-align:right;top:191.87px;font-size:7px;color:#e0e0e0;">Preset:</div>
<div class="a" style="left:331.7px;top:190.4px;width:139.3px;height:9.8px;background:#3a3a3a;border-radius:1.5px"></div>
<div class="t" style="left:334.7px;top:191.97px;font-size:7px;color:#ececec;">Default</div>
<svg style="left:465.5px;top:194px" width="5" height="3" viewBox="0 0 5 3"><path d="M0.5 0.5 L2.5 2.5 L4.5 0.5" stroke="#ccc" fill="none" stroke-width="0.9"/></svg>
<div class="t" style="left:127.80000000000001px;width:200px;text-align:right;top:210.17px;font-size:7px;color:#c8c8c8;">Target:</div>
<div class="a" style="left:331.7px;top:208.8px;width:139.3px;height:9.8px;background:#4d4d4d;border-radius:1.5px"></div>
<div class="t" style="left:334.7px;top:210.27px;font-size:7px;color:#6e6e6e;">Canvas</div>
<svg style="left:465.5px;top:212.5px" width="5" height="3" viewBox="0 0 5 3"><path d="M0.5 0.5 L2.5 2.5 L4.5 0.5" stroke="#666" fill="none" stroke-width="0.9"/></svg>
<div class="a" style="left:479.5px;top:189.8px;width:43.3px;height:13.3px;background:transparent;border:0.9px solid #c8c8c8;border-radius:7px"></div>
<div class="t" style="left:401.2px;width:200px;text-align:center;top:193.07px;font-size:7px;color:#ececec;">OK</div>
<div class="a" style="left:479.5px;top:208.7px;width:43.3px;height:13.3px;background:transparent;border:0.9px solid #8e8e8e;border-radius:7px"></div>
<div class="t" style="left:401.2px;width:200px;text-align:center;top:211.97px;font-size:7px;color:#e0e0e0;">Cancel</div>
<div class="a" style="left:480px;top:230.2px;width:6px;height:6px;background:#e8e8e8;border-radius:1px"></div>
<svg style="left:480.8px;top:231px" width="4.5" height="4.5" viewBox="0 0 4.5 4.5"><path d="M0.5 2.3 L1.8 3.6 L4 0.8" stroke="#333" stroke-width="0.9" fill="none"/></svg>
<div class="t" style="left:491px;top:229.87px;font-size:7px;color:#e0e0e0;">Preview</div>
<div class="a" style="left:297.8px;top:224.2px;width:173.2px;height:38.5px;background:transparent;border:0.7px solid #4a4a4a;border-radius:2px"></div>
<div class="t" style="left:308px;top:227.17px;font-size:7px;color:#e0e0e0;">Color</div>
<div class="t" style="left:131px;width:200px;text-align:right;top:243.77px;font-size:7px;color:#e0e0e0;">Color:</div>
<div class="a" style="left:332.4px;top:242.7px;width:112.6px;height:9.5px;background:#3a3a3a;border-radius:1.5px"></div>
<div class="a" style="left:335.6px;top:244.3px;width:8px;height:6.3px;background:#28e8e8;border:0.5px solid #1a8a8a"></div>
<div class="t" style="left:344px;top:243.97px;font-size:7px;color:#ececec;">Cyan</div>
<svg style="left:439px;top:246px" width="5" height="3" viewBox="0 0 5 3"><path d="M0.5 0.5 L2.5 2.5 L4.5 0.5" stroke="#ccc" fill="none" stroke-width="0.9"/></svg>
<div class="a" style="left:448.5px;top:238.5px;width:17px;height:17.5px;background:#00ffff;"></div>
<div class="a" style="left:298.5px;top:273.2px;width:84.3px;height:52.5px;background:transparent;border:0.7px solid #4a4a4a;border-radius:2px"></div>
<div class="a" style="left:387.6px;top:273.2px;width:83.4px;height:52.5px;background:transparent;border:0.7px solid #4a4a4a;border-radius:2px"></div>
<div class="a" style="left:306px;top:268.5px;width:48px;height:9px;background:#535353;"></div>
<div class="a" style="left:395px;top:268.5px;width:32px;height:9px;background:#535353;"></div>
<div class="a" style="left:309px;top:271px;width:6.2px;height:6px;background:#e8e8e8;border-radius:1px"></div>
<svg style="left:309.8px;top:271.8px" width="4.5" height="4.5" viewBox="0 0 4.5 4.5"><path d="M0.5 2.3 L1.8 3.6 L4 0.8" stroke="#333" stroke-width="0.9" fill="none"/></svg>
<div class="t" style="left:320px;top:270.57px;font-size:7px;color:#e0e0e0;">Columns</div>
<div class="a" style="left:397.8px;top:271px;width:6px;height:6px;background:#3e3e3e;border:0.8px solid #7e7e7e;border-radius:1px"></div>
<div class="t" style="left:409px;top:270.57px;font-size:7px;color:#e0e0e0;">Rows</div>
<div class="t" style="left:128.3px;width:200px;text-align:right;top:283.07px;font-size:7px;color:#e0e0e0;">Number</div>
<div class="a" style="left:330.8px;top:281.2px;width:31.2px;height:9.8px;background:#3b4252;box-shadow:0 0 0 0.8px #44628e,0 0 2.5px #4a78b0"></div>
<div class="a" style="left:332px;top:282.6px;width:4.4px;height:7.4px;background:#3f72c0;"></div>
<div class="t" style="left:332.6px;top:283.17px;font-size:7px;color:#ffffff;">8</div>
<div class="t" style="left:128.3px;width:200px;text-align:right;top:297.57px;font-size:7px;color:#e0e0e0;">Width</div>
<div class="a" style="left:330.8px;top:296.4px;width:31.2px;height:9.2px;background:#464646;border:0.6px solid #3c3c3c"></div>
<div class="t" style="left:128.3px;width:200px;text-align:right;top:311.97px;font-size:7px;color:#e0e0e0;">Gutter</div>
<div class="a" style="left:330.8px;top:310.8px;width:31.2px;height:9.2px;background:#444444;border:0.6px solid #3c3c3c"></div>
<div class="t" style="left:332.5px;top:312.07px;font-size:7px;color:#ececec;">20 px</div>
<div class="t" style="left:217.5px;width:200px;text-align:right;top:283.07px;font-size:7px;color:#6e6e6e;">Number</div>
<div class="a" style="left:419.6px;top:281.9px;width:31.1px;height:9.2px;background:#4d4d4d;border:0.6px solid #4a4a4a"></div>
<div class="t" style="left:217.5px;width:200px;text-align:right;top:297.57px;font-size:7px;color:#6e6e6e;">Height</div>
<div class="a" style="left:419.6px;top:296.4px;width:31.1px;height:9.2px;background:#4d4d4d;border:0.6px solid #4a4a4a"></div>
<div class="t" style="left:217.5px;width:200px;text-align:right;top:311.97px;font-size:7px;color:#6e6e6e;">Gutter</div>
<div class="a" style="left:419.6px;top:310.79999999999995px;width:31.1px;height:9.2px;background:#4d4d4d;border:0.6px solid #4a4a4a"></div>
<div class="a" style="left:298.5px;top:335.5px;width:172.5px;height:33.5px;background:transparent;border:0.7px solid #4a4a4a;border-radius:2px"></div>
<div class="a" style="left:306px;top:331px;width:36px;height:9px;background:#535353;"></div>
<div class="a" style="left:309px;top:332.3px;width:6px;height:6px;background:#3e3e3e;border:0.8px solid #7e7e7e;border-radius:1px"></div>
<div class="t" style="left:320px;top:331.87px;font-size:7px;color:#e0e0e0;">Margin</div>
<div class="t" style="left:308px;top:343.17px;font-size:7px;color:#6e6e6e;">Top:</div>
<div class="t" style="left:345px;top:343.17px;font-size:7px;color:#6e6e6e;">Left:</div>
<div class="t" style="left:381px;top:343.17px;font-size:7px;color:#6e6e6e;">Bottom:</div>
<div class="t" style="left:419px;top:343.17px;font-size:7px;color:#6e6e6e;">Right:</div>
<div class="a" style="left:309px;top:355.8px;width:29.8px;height:8.4px;background:#4d4d4d;border:0.6px solid #4a4a4a"></div>
<div class="a" style="left:346px;top:355.8px;width:29.8px;height:8.4px;background:#4d4d4d;border:0.6px solid #4a4a4a"></div>
<div class="a" style="left:383px;top:355.8px;width:29.8px;height:8.4px;background:#4d4d4d;border:0.6px solid #4a4a4a"></div>
<div class="a" style="left:420px;top:355.8px;width:29.8px;height:8.4px;background:#4d4d4d;border:0.6px solid #4a4a4a"></div>
<div class="a" style="left:297.8px;top:377.4px;width:6px;height:6px;background:#3e3e3e;border:0.8px solid #7e7e7e;border-radius:1px"></div>
<div class="t" style="left:309.7px;top:377.04px;font-size:6.85px;color:#e0e0e0;">Center Columns</div>
<div class="a" style="left:364.5px;top:377.4px;width:6px;height:6px;background:#3e3e3e;border:0.8px solid #7e7e7e;border-radius:1px"></div>
<div class="t" style="left:375.7px;top:377.04px;font-size:6.85px;color:#e0e0e0;">Clear Existing Guides</div>
</div></body></html>
